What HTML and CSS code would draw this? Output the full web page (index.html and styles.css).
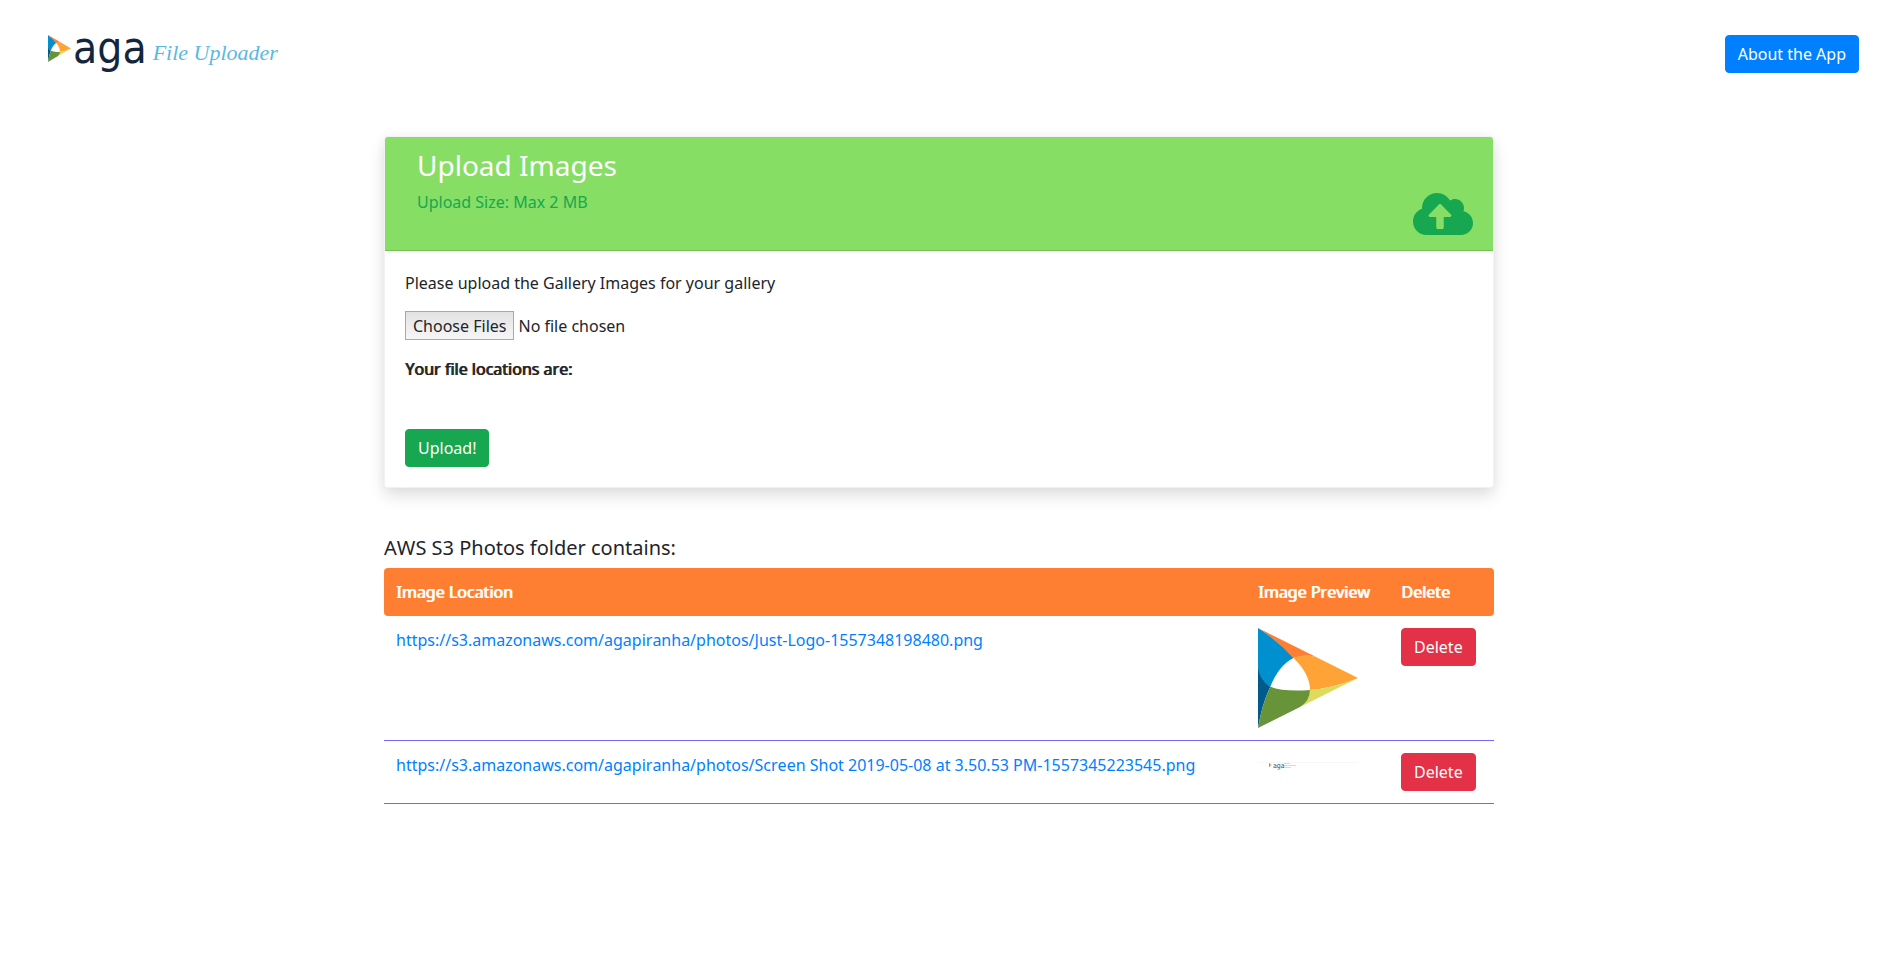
FILE: index.html
```
<!DOCTYPE html>
<html lang="en">
<head>
<meta charset="utf-8">
<title>File Uploader</title>
<link rel="stylesheet" href="styles.css">
</head>
<body>
<svg class="defs" aria-hidden="true">
  <symbol id="mark" viewBox="0 0 100 100" preserveAspectRatio="none">
    <path fill="#ff7f32" d="M0 0 58 29Q46 26 35.500 30Q18 12 0 0z"/>
    <path fill="#0090d0" d="M0 0Q20 13 35.500 30Q21 37 12.300 58.700Q0 52 0 38z"/>
    <path fill="#005a8b" d="M0 38Q1 52 12.300 58.700Q4 76 0 100z"/>
    <path fill="#ffa336" d="M35.500 30Q46 25 58 29L100 50Q76 60 52 62Q52 46 35.500 30z"/>
    <path fill="#dedb5a" d="M52 62Q76 60 100 50L42 79Q52 73 52 62z"/>
    <path fill="#679439" d="M12.300 58.700Q26 64 52 62Q52 73 42 79L0 100Q4 76 12.300 58.700z"/>
  </symbol>
</svg>

<header class="topbar">
  <div class="brand">
    <svg class="brand-mark" aria-hidden="true"><use href="#mark"/></svg>
    <span class="brand-name">aga</span>
    <span class="brand-sub">File Uploader</span>
  </div>
  <button class="btn btn-primary" type="button">About the App</button>
</header>

<main class="container">
  <form class="card">
    <div class="card-header">
      <div class="card-heading">
        <h3 class="card-title">Upload Images</h3>
        <p class="card-note">Upload Size: Max 2 MB</p>
      </div>
      <svg class="cloud" viewBox="0 0 640 512" aria-hidden="true"><path fill="currentColor" d="M537.600 226.600c4.100-10.700 6.400-22.400 6.400-34.600 0-53-43-96-96-96-19.700 0-38.100 6-53.300 16.200C367 64.200 315.300 32 256 32c-88.400 0-160 71.600-160 160 0 2.700.1 5.400.2 8.100C40.200 219.800 0 273.200 0 336c0 79.500 64.500 144 144 144h368c70.700 0 128-57.300 128-128 0-61.900-44-113.600-102.400-125.400zM393.400 288H328v112c0 8.800-7.200 16-16 16h-48c-8.800 0-16-7.200-16-16V288h-65.400c-14.300 0-21.400-17.200-11.300-27.300l105.400-105.400c6.200-6.200 16.400-6.200 22.600 0l105.400 105.400c10.100 10.100 2.900 27.300-11.300 27.300z"/></svg>
    </div>
    <div class="card-body">
      <label class="prompt" for="gallery">Please upload the Gallery Images for your gallery</label>
      <input class="file" id="gallery" type="file" multiple>
      <p class="locations">Your file locations are:</p>
      <button class="btn btn-success" type="button">Upload!</button>
    </div>
  </form>

  <h5 class="list-title">AWS S3 Photos folder contains:</h5>
  <table class="files">
    <thead>
      <tr>
        <th>Image Location</th>
        <th class="col-preview">Image Preview</th>
        <th class="col-delete">Delete</th>
      </tr>
    </thead>
    <tbody>
      <tr>
        <td><a href="#">https://s3.amazonaws.com/agapiranha/photos/Just-Logo-1557348198480.png</a></td>
        <td><svg class="preview" role="img" aria-label="Logo"><use href="#mark"/></svg></td>
        <td><button class="btn btn-danger" type="button">Delete</button></td>
      </tr>
      <tr>
        <td><a href="#">https://s3.amazonaws.com/agapiranha/photos/Screen Shot 2019-05-08 at 3.50.53 PM-1557345223545.png</a></td>
        <td>
          <svg class="preview-wide" viewBox="0 0 100 20" role="img" aria-label="Screen shot">
            <path d="M0 .5H100" stroke="#f6f6f6"/>
            <use href="#mark" x="11" y="1" width="3" height="4"/>
            <text class="preview-name" x="15" y="6">aga</text>
            <path d="M26 1.500h6M26 3.500h12M26 5.500h7" stroke="#cbd2d9" stroke-width=".8"/>
          </svg>
        </td>
        <td><button class="btn btn-danger" type="button">Delete</button></td>
      </tr>
    </tbody>
  </table>
</main>
</body>
</html>
```
FILE: styles.css
```
*, *::before, *::after { box-sizing: border-box; }

body {
  margin: 0;
  padding-right: 18px;
  font: 16px/24px "Noto Sans", sans-serif;
  font-kerning: none;
  color: #212529;
  background: #fff;
}

h3, h5, p { margin: 0; font-weight: 400; }

.defs { position: absolute; width: 0; height: 0; }

.topbar {
  display: flex;
  justify-content: space-between;
  align-items: flex-start;
  padding: 35px 19px 0 48px;
}

.brand { display: flex; align-items: center; height: 38px; }
.brand-mark { width: 23px; height: 27px; margin-right: 2px; margin-bottom: 12px; }
.brand-name {
  font: 44px/38px "DejaVu Sans Condensed", "Liberation Sans", sans-serif;
  color: #14263c;
  margin-bottom: 12px;
}
.brand-sub {
  margin-left: 6px;
  margin-bottom: 2px;
  font: italic 22px/30px Georgia, "Liberation Serif", serif;
  color: #5bb8df;
}

.btn {
  display: inline-block;
  height: 38px;
  padding: 6px 12px;
  border: 1px solid transparent;
  border-radius: 4px;
  font: inherit;
  font-kerning: none;
  color: #fff;
  white-space: nowrap;
  cursor: pointer;
}
.btn-primary { background: #007fff; border-color: #007fff; }
.btn-success { background: #16a750; border-color: #16a750; }
.btn-danger { background: #e33147; border-color: #e33147; vertical-align: top; }

.container { max-width: 1110px; margin: 63px auto 0; }

.card {
  border: 1px solid rgba(0, 0, 0, .05);
  border-radius: 4px;
  background: #fff;
  box-shadow: 0 8px 16px rgba(0, 0, 0, .12), 0 0 12px rgba(0, 0, 0, .04);
}
.card-header {
  display: flex;
  justify-content: space-between;
  align-items: flex-end;
  min-height: 114px;
  padding: 11px 20px 12px;
  border-bottom: 1px solid #74c257;
  border-radius: 3px 3px 0 0;
  background: #86de64;
}
.card-heading { align-self: flex-start; padding-left: 12px; }
.card-title { margin-bottom: 8px; font-size: 28px; line-height: 34px; color: #fff; }
.card-note { color: #16a750; }
.cloud { width: 60px; height: 48px; color: #16a750; }

.card-body {
  display: flex;
  flex-direction: column;
  align-items: flex-start;
  gap: 16px;
  padding: 20px;
}
.file { font: inherit; color: inherit; height: 30px; max-width: 100%; }
.file::file-selector-button {
  height: 29px;
  margin: 0 4px 0 0;
  padding: 1px 7px;
  border: 1px solid #a9a9a9;
  border-radius: 0;
  font: inherit;
  color: #212529;
  background: linear-gradient(#e2e2e2, #f6f6f6);
}
.locations { margin-bottom: 32px; }
.locations, .files th { font-weight: 400; text-shadow: 1px 0 currentColor; }

.list-title { margin: 48px 0 8px; font-size: 20px; line-height: 24px; }

.files { width: 100%; border-spacing: 0; }
.files th { padding: 12px; text-align: left; color: #fff; background: #ff7f32; }
.files th:first-child { border-radius: 4px 0 0 4px; }
.files th:last-child { border-radius: 0 4px 4px 0; }
.files td { padding: 12px; vertical-align: top; border-bottom: 1px solid #7567f8; }
.files a { color: #007fff; text-decoration: none; }
.col-preview { width: 143px; }
.col-delete { width: 105px; }
.preview { display: block; width: 100px; height: 100px; }
.preview-wide { display: block; width: 100px; height: 20px; margin-top: 9px; }
.preview-name { font: 7px "DejaVu Sans Condensed", sans-serif; fill: #3d4855; }
```
